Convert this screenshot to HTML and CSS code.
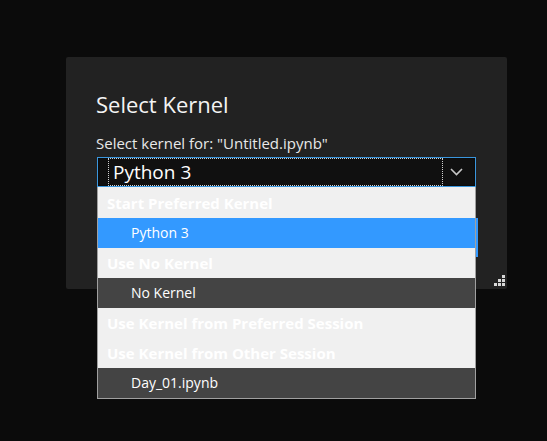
FILE: index.html
```html
<!DOCTYPE html>
<html lang="en">
<head>
    <meta charset="UTF-8">
    <meta name="viewport" content="width=device-width, initial-scale=1.0">
    <title>Select Kernel</title>
    <link rel="stylesheet" href="styles.css">
</head>
<body class="mainBody">
    <div class="dialog">
        <h2 class="title">Select Kernel</h2>
        <label class="fieldLabel" for="kernel">Select kernel for: "Untitled.ipynb"</label>
        <div class="selectWrap">
            <div class="selectBox" id="kernel">
                <span class="selectValue">Python 3</span>
                <span class="selectArrow">
                    <svg width="13" height="8" viewBox="0 0 13 8"><path d="M1 1 L6.5 6.5 L12 1" fill="none" stroke="#c8c8c8" stroke-width="1.6"/></svg>
                </span>
            </div>
            <ul class="optionList">
                <li class="optGroup">Start Preferred Kernel</li>
                <li class="opt selected">Python 3</li>
                <li class="optGroup">Use No Kernel</li>
                <li class="opt">No Kernel</li>
                <li class="optGroup">Use Kernel from Preferred Session</li>
                <li class="optGroup">Use Kernel from Other Session</li>
                <li class="opt">Day_01.ipynb</li>
            </ul>
        </div>
        <div class="buttons">
            <button class="selectBtn">Select</button>
        </div>
        <div class="grip">
            <i></i><i></i><i></i><i></i><i></i><i></i>
        </div>
    </div>
</body>
</html>
```

FILE: styles.css
```css
body {
    margin: 0;
    background-color: #0b0b0b;
    font-family: "Open Sans", Arial, sans-serif;
    width: 547px;
    height: 441px;
    overflow: hidden;
}
.dialog {
    position: relative;
    box-sizing: border-box;
    width: 441px;
    height: 232px;
    margin: 57px 0 0 66px;
    padding: 34px 30px 0 30px;
    background-color: #222222;
    border-radius: 2px;
}
.title {
    margin: 0;
    font-size: 22px;
    font-weight: normal;
    line-height: 26px;
    color: #f4f4f4;
}
.fieldLabel {
    display: block;
    margin-top: 17px;
    font-size: 15px;
    line-height: 18px;
    color: #e8e8e8;
}
.selectWrap {
    position: relative;
    margin: 5px 0 0 1px;
}
.selectBox {
    display: flex;
    align-items: center;
    box-sizing: border-box;
    width: 379px;
    height: 30px;
    border: 1px solid #3a96dd;
    background-color: #101010;
    box-shadow: inset 0 0 2px #000;
}
.selectValue {
    box-sizing: border-box;
    width: 335px;
    height: 28px;
    margin-left: 10px;
    padding-left: 4px;
    border: 1px dotted #d0d0d0;
    font-size: 19px;
    line-height: 26px;
    color: #ffffff;
}
.selectArrow {
    display: flex;
    justify-content: center;
    flex: 1;
    padding-right: 6px;
}
.optionList {
    position: absolute;
    top: 30px;
    left: 0;
    z-index: 2;
    box-sizing: border-box;
    width: 379px;
    margin: 0;
    padding: 1px 0 0 0;
    list-style: none;
    border: 1px solid #a0a0a0;
    border-top: none;
    background-color: #f0f0f0;
}
.optionList li {
    height: 30px;
    line-height: 30px;
    font-size: 14px;
    color: #ffffff;
    white-space: nowrap;
}
.optGroup {
    padding-left: 9px;
    font-weight: bold;
    font-size: 15px !important;
}
.opt {
    padding-left: 33px;
    background-color: #444444;
}
.opt.selected {
    background-color: #3399ff;
}
.buttons {
    display: flex;
    justify-content: flex-end;
    width: 382px;
    margin-top: 31px;
}
.selectBtn {
    width: 120px;
    height: 39px;
    border: none;
    background-color: #3399ff;
    color: #ffffff;
    font-family: inherit;
    font-size: 14px;
}
.grip {
    position: absolute;
    right: 2px;
    bottom: 3px;
    display: grid;
    grid-template-columns: repeat(3, 3px);
    grid-template-rows: repeat(3, 3px);
    gap: 1px;
}
.grip i {
    background-color: #d8d8d8;
}
.grip i:nth-child(1) { grid-column: 3; grid-row: 1; }
.grip i:nth-child(2) { grid-column: 2; grid-row: 2; }
.grip i:nth-child(3) { grid-column: 3; grid-row: 2; }
.grip i:nth-child(4) { grid-column: 1; grid-row: 3; }
.grip i:nth-child(5) { grid-column: 2; grid-row: 3; }
.grip i:nth-child(6) { grid-column: 3; grid-row: 3; }
```
